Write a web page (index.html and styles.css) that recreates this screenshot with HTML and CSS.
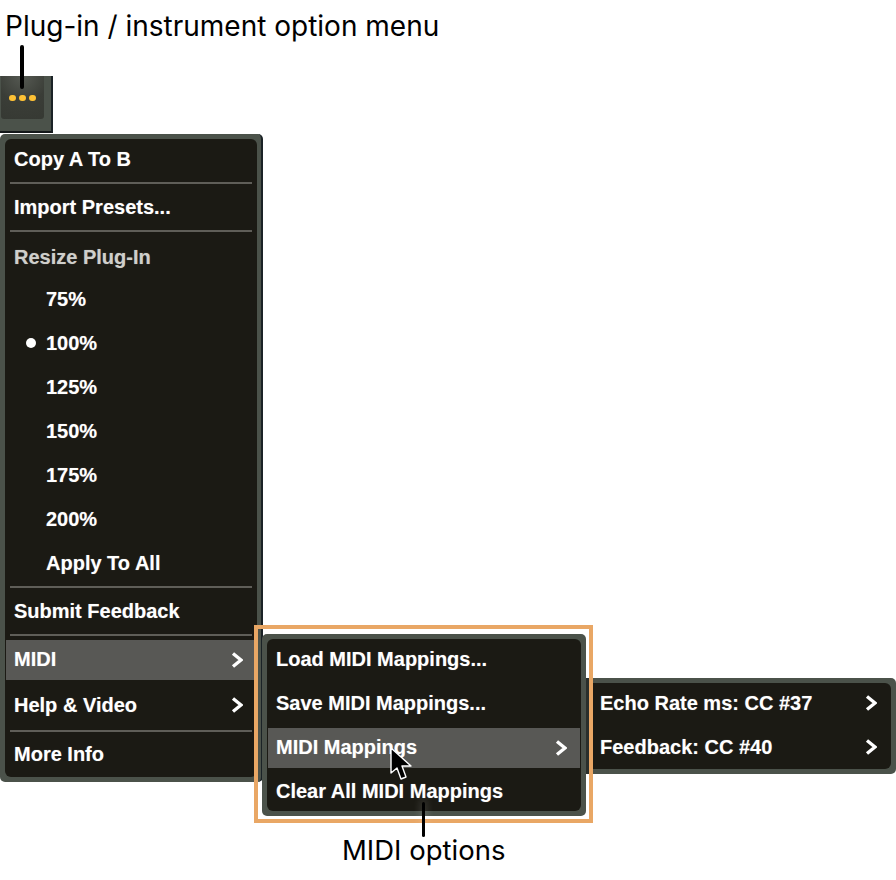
FILE: index.html
```html
<!DOCTYPE html>
<html lang="en">
<head>
    <meta charset="UTF-8">
    <meta name="viewport" content="width=device-width, initial-scale=1.0">
    <title>Plug-in option menu</title>
    <link rel="stylesheet" href="styles.css">
</head>
<body>
    <div class="canvas">
        <p class="caption caption-top">Plug-in / instrument option menu</p>

        <div class="toolbar">
            <button class="options-btn">
                <span class="dot"></span><span class="dot"></span><span class="dot"></span>
            </button>
        </div>

        <!-- main menu -->
        <div class="menu menu-main">
            <ul class="menu-inner">
                <li class="row row-first">Copy A To B</li>
                <li class="sep"></li>
                <li class="row row-tall">Import Presets...</li>
                <li class="sep"></li>
                <li class="row row-heading">Resize Plug-In</li>
                <li class="row row-sub">75%</li>
                <li class="row row-sub row-checked"><span class="bullet"></span>100%</li>
                <li class="row row-sub">125%</li>
                <li class="row row-sub">150%</li>
                <li class="row row-sub">175%</li>
                <li class="row row-sub">200%</li>
                <li class="row row-sub">Apply To All</li>
                <li class="sep sep-low"></li>
                <li class="row row-tall">Submit Feedback</li>
                <li class="sep"></li>
                <li class="row row-active row-midi">MIDI
                    <svg class="chevron" viewBox="0 0 12 16"><path d="M2 1.500 L10 8 L2 14.500"/></svg>
                </li>
                <li class="row row-help">Help &amp; Video
                    <svg class="chevron" viewBox="0 0 12 16"><path d="M2 1.500 L10 8 L2 14.500"/></svg>
                </li>
                <li class="sep"></li>
                <li class="row">More Info</li>
            </ul>
        </div>

        <!-- third level, sits behind the orange box -->
        <div class="menu menu-cc">
            <ul class="menu-inner">
                <li class="row">Echo Rate ms: CC #37
                    <svg class="chevron" viewBox="0 0 12 16"><path d="M2 1.500 L10 8 L2 14.500"/></svg>
                </li>
                <li class="row">Feedback: CC #40
                    <svg class="chevron" viewBox="0 0 12 16"><path d="M2 1.500 L10 8 L2 14.500"/></svg>
                </li>
            </ul>
        </div>

        <!-- MIDI submenu -->
        <div class="menu menu-midi">
            <ul class="menu-inner">
                <li class="row row-load">Load MIDI Mappings...</li>
                <li class="row">Save MIDI Mappings...</li>
                <li class="row row-active row-mappings">MIDI Mappings
                    <svg class="chevron" viewBox="0 0 12 16"><path d="M2 1.500 L10 8 L2 14.500"/></svg>
                </li>
                <li class="row">Clear All MIDI Mappings</li>
            </ul>
        </div>

        <div class="highlight-box"></div>

        <svg class="cursor" viewBox="0 0 24 32">
            <path d="M3 0 L3 25 L9 20 L13 31 L18 29 L14 18 L23 18 Z"/>
        </svg>

        <div class="leader leader-top"></div>
        <div class="leader leader-midi"></div>
        <p class="caption caption-midi">MIDI options</p>
    </div>
</body>
</html>
```

FILE: styles.css
```css
:root {
    --frame: #4b524a;
    --panel: #1b1a14;
    --active: #585855;
    --line: #5f5e58;
    --orange: #e9a765;
}

* {
    box-sizing: border-box;
    margin: 0;
    padding: 0;
}

body {
    background: white;
    font-family: "Liberation Sans", Arial, sans-serif;
}

.canvas {
    position: relative;
    width: 896px;
    height: 880px;
    overflow: hidden;
}

/* Annotations */
.caption {
    position: absolute;
    color: #000;
    font-family: Inter, "Liberation Sans", sans-serif;
    line-height: 30px;
    white-space: nowrap;
}

.caption-top {
    left: 5px;
    top: 11px;
    font-size: 28px;
}

.caption-midi {
    left: 342px;
    top: 835px;
    font-size: 27.5px;
}

.leader {
    position: absolute;
    background: #000;
    border-radius: 2px;
}

.leader-top {
    left: 20px;
    top: 45px;
    width: 4px;
    height: 44px;
}

.leader-midi {
    left: 422px;
    top: 802px;
    width: 3px;
    height: 35px;
    box-shadow: 0 -3px 9px rgba(255, 255, 255, 0.3);
}

.highlight-box {
    position: absolute;
    left: 254px;
    top: 625px;
    width: 339px;
    height: 198px;
    border: 4px solid var(--orange);
}

.cursor {
    position: absolute;
    left: 388px;
    top: 748px;
    width: 24px;
    height: 32px;
    overflow: visible;
}

.cursor path {
    fill: #000;
    stroke: #fff;
    stroke-width: 1.4;
    stroke-linejoin: round;
}

/* Toolbar */
.toolbar {
    position: absolute;
    left: 0;
    top: 76px;
    width: 53px;
    height: 57px;
    background: var(--frame);
    border-right: 2px solid #1a2226;
    border-bottom: 2px solid #14181a;
    padding-left: 1px;
}

.options-btn {
    display: flex;
    justify-content: center;
    align-items: center;
    gap: 3.5px;
    width: 43px;
    height: 43px;
    padding-top: 1px;
    background: radial-gradient(circle at 50% 0, #565a53, #3a3d37 55%, #363933);
    border: none;
    border-radius: 0 0 3px 3px;
}

.dot {
    width: 6.5px;
    height: 6.5px;
    border-radius: 50%;
    background: #fdc135;
}

/* Menus */
.menu {
    position: absolute;
    background: var(--frame);
    padding: 5px;
    border-radius: 5px;
}

.menu-main {
    left: 0;
    top: 134px;
    width: 263px;
    height: 648px;
    border-right: 2px solid #1a2226;
    padding-right: 4px;
}

.menu-midi {
    left: 262px;
    top: 634px;
    width: 324px;
    height: 182px;
}

.menu-cc {
    left: 586px;
    top: 678px;
    width: 310px;
    height: 96px;
    border-left: 3px solid #2a2f2b;
    padding-left: 0;
    border-radius: 0 5px 5px 0;
}

.menu-inner {
    list-style: none;
    height: 100%;
    background: var(--panel);
    border-radius: 6px;
}

.row {
    position: relative;
    display: flex;
    align-items: center;
    justify-content: space-between;
    height: 44px;
    padding: 0 9px;
    color: #fff;
    font-size: 20px;
    font-weight: bold;
    white-space: nowrap;
    text-shadow: 0 0 1px rgba(255, 255, 255, 0.4);
}

.row-first {
    height: 43px;
    padding-bottom: 3px;
}

.row-tall {
    height: 46px;
}

.row-heading {
    height: 45px;
    padding-top: 5px;
    color: #cfcfcb;
}

.row-sub {
    padding-left: 41px;
}

.bullet {
    position: absolute;
    left: 21px;
    top: 17px;
    width: 10px;
    height: 10px;
    border-radius: 50%;
    background: #fff;
}

.sep {
    height: 2px;
    margin: 0 5px;
    background: var(--line);
}

.sep-low {
    margin-top: 1px;
}

.row-active {
    height: 40px;
    background: var(--active);
}

.row-midi {
    margin: 4px 0 0 1px;
    width: 250px;
    padding-left: 8px;
    padding-right: 13px;
    padding-bottom: 2px;
}

.row-help {
    height: 50px;
    padding-right: 14px;
}

/* rows in the MIDI submenu run 44px apart but the first one starts short */
.menu-midi .row-load {
    height: 40px;
    margin-bottom: 2px;
}

.row-mappings {
    width: 312px;
    margin: 3px 0 1px 1px;
    padding-left: 8px;
    padding-right: 13px;
    padding-bottom: 2px;
}

.menu-cc .menu-inner {
    border-radius: 0 6px 6px 0;
}

.menu-cc .row {
    top: -2px;
    padding-left: 11px;
    padding-right: 14px;
}

.chevron {
    width: 12px;
    height: 16px;
    flex: none;
}

.row-midi .chevron,
.row-mappings .chevron {
    position: relative;
    top: 1px;
}

.chevron path {
    fill: none;
    stroke: #fff;
    stroke-width: 3.4;
}
```
